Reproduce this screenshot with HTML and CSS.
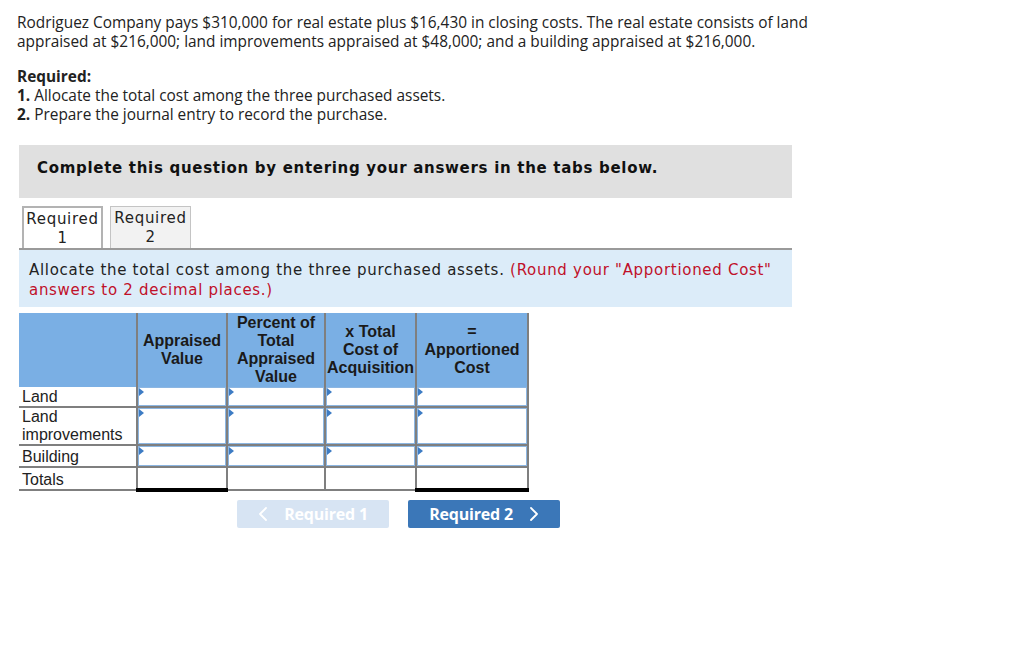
FILE: index.html
```html
<!DOCTYPE html>
<html>
<head>
<meta charset="utf-8">
<link rel="stylesheet" href="styles.css">
</head>
<body>
<div class="page">
  <div class="question">
    <p class="intro">Rodriguez Company pays $310,000 for real estate plus $16,430 in closing costs. The real estate consists of land appraised at $216,000; land improvements appraised at $48,000; and a building appraised at $216,000.</p>
    <p class="req-title">Required:</p>
    <p class="req-line"><b>1.</b> Allocate the total cost among the three purchased assets.</p>
    <p class="req-line"><b>2.</b> Prepare the journal entry to record the purchase.</p>
  </div>

  <div class="instructions">Complete this question by entering your answers in the tabs below.</div>

  <div class="tabs">
    <div class="tab active">Required<br>1</div>
    <div class="tab">Required<br>2</div>
  </div>

  <div class="panel">Allocate the total cost among the three purchased assets. <span class="red">(Round your "Apportioned Cost" answers to 2 decimal places.)</span></div>

  <table class="grid">
    <colgroup>
      <col class="c1"><col class="c2"><col class="c3"><col class="c4"><col class="c5">
    </colgroup>
    <thead>
      <tr>
        <th class="lab"></th>
        <th>Appraised<br>Value</th>
        <th>Percent of<br>Total<br>Appraised<br>Value</th>
        <th>x Total<br>Cost of<br>Acquisition</th>
        <th>=<br>Apportioned<br>Cost</th>
      </tr>
    </thead>
    <tbody>
      <tr class="r-land">
        <td class="lab">Land</td>
        <td><div class="inp"></div></td>
        <td><div class="inp"></div></td>
        <td><div class="inp"></div></td>
        <td><div class="inp"></div></td>
      </tr>
      <tr class="r-impr">
        <td class="lab">Land<br>improvements</td>
        <td><div class="inp"></div></td>
        <td><div class="inp"></div></td>
        <td><div class="inp"></div></td>
        <td><div class="inp"></div></td>
      </tr>
      <tr class="r-bldg">
        <td class="lab">Building</td>
        <td><div class="inp"></div></td>
        <td><div class="inp"></div></td>
        <td><div class="inp"></div></td>
        <td><div class="inp"></div></td>
      </tr>
      <tr class="r-tot">
        <td class="lab">Totals</td>
        <td class="total"></td>
        <td></td>
        <td></td>
        <td class="total"></td>
      </tr>
    </tbody>
  </table>

  <div class="nav">
    <div class="btn disabled">
      <svg class="chev" width="10" height="16" viewBox="0 0 10 16"><path d="M8 2 L2 8 L8 14" fill="none" stroke="#fff" stroke-width="1.8" stroke-linecap="round" stroke-linejoin="round"/></svg>
      <span>Required 1</span>
    </div>
    <div class="btn primary">
      <span>Required 2</span>
      <svg class="chev" width="10" height="16" viewBox="0 0 10 16"><path d="M2 2 L8 8 L2 14" fill="none" stroke="#fff" stroke-width="1.8" stroke-linecap="round" stroke-linejoin="round"/></svg>
    </div>
  </div>
</div>
</body>
</html>
```

FILE: styles.css
```css
html, body {
  margin: 0;
  padding: 0;
  background: #fff;
}

.page {
  padding: 13px 0 0 17px;
  width: 800px;
}

.question {
  font-family: "Open Sans", "Liberation Sans", sans-serif;
  font-size: 15.4px;
  color: #222;
  line-height: 19px;
}

.question p {
  margin: 0;
}

.intro {
  width: 800px;
}

.req-title {
  font-weight: bold;
  margin-top: 16px !important;
}

.instructions {
  margin: 21px 0 0 2px;
  width: 773px;
  box-sizing: border-box;
  height: 53px;
  padding: 14px 0 0 18px;
  background: #e0e0e0;
  font-family: "DejaVu Sans", Verdana, sans-serif;
  font-weight: bold;
  font-size: 15px;
  letter-spacing: 0.7px;
  color: #111;
}

.tabs {
  display: flex;
  margin: 8px 0 0 2px;
  width: 773px;
  border-bottom: 2px solid #9a9a9a;
  gap: 7px;
  padding-left: 3px;
  box-sizing: border-box;
}

.tab {
  width: 81px;
  height: 42px;
  box-sizing: border-box;
  border: 1px solid #c4c4c4;
  border-bottom: none;
  background: #f2f2f2;
  font-family: "DejaVu Sans", Verdana, sans-serif;
  font-size: 15px;
  letter-spacing: 0.7px;
  line-height: 19px;
  text-align: center;
  color: #222;
  padding-top: 2px;
}

.tab.active {
  background: #fff;
  border: 2px solid #b3b3b3;
  border-bottom: none;
}

.panel {
  margin-left: 2px;
  width: 773px;
  box-sizing: border-box;
  background: #dcecf9;
  height: 57px;
  padding: 10px 8px 0 10px;
  font-family: "DejaVu Sans", Verdana, sans-serif;
  font-size: 15px;
  letter-spacing: 0.7px;
  line-height: 20px;
  color: #222;
}

.red {
  color: #c0102a;
}

.grid {
  margin: 6px 0 0 2px;
  border-collapse: collapse;
  table-layout: fixed;
  width: 509px;
  font-family: "Liberation Sans", Arial, sans-serif;
  font-size: 16px;
  color: #222;
}

col.c1 { width: 118px; }
col.c2 { width: 90px; }
col.c3 { width: 98px; }
col.c4 { width: 91px; }
col.c5 { width: 112px; }

.grid th {
  background: #7aafe4;
  font-weight: bold;
  font-size: 16px;
  line-height: 18px;
  height: 74px;
  padding: 0;
  border-left: 2px solid #7f7f7f;
  border-right: 2px solid #7f7f7f;
  vertical-align: middle;
  text-align: center;
  color: #1a1a1a;
  white-space: nowrap;
}

.grid th.lab {
  border-left: none;
}

.grid td {
  padding: 0;
  border: 2px solid #7f7f7f;
  vertical-align: top;
}

.grid td.lab {
  border-left: none;
  padding: 0 0 0 3px;
  line-height: 18px;
  vertical-align: bottom;
  white-space: nowrap;
}

.r-land td { height: 19px; }
.r-impr td { height: 36px; }
.r-bldg td { height: 20px; }
.r-tot td { height: 20px; }

.grid tbody tr:first-child td {
  border-top: none;
}

.inp {
  position: relative;
  box-sizing: border-box;
  border: 1px solid #8cb6e2;
  background: #fff;
}

.r-land .inp { height: 19px; }
.r-impr .inp { height: 36px; }
.r-bldg .inp { height: 20px; }

.inp::before {
  content: "";
  position: absolute;
  left: 0;
  top: 0;
  border-left: 5px solid #3d7cc4;
  border-top: 4px solid transparent;
  border-bottom: 4px solid transparent;
}

.grid td.total {
  border-top: 2px solid #000;
  border-bottom: 4px solid #000;
}

.nav {
  display: flex;
  gap: 19px;
  margin: 8px 0 0 220px;
}

.btn {
  width: 152px;
  height: 28px;
  box-sizing: border-box;
  border-radius: 2px;
  display: flex;
  align-items: center;
  justify-content: center;
  gap: 16px;
  font-family: "Open Sans", "Liberation Sans", sans-serif;
  font-weight: bold;
  font-size: 16px;
  letter-spacing: -0.2px;
  color: #fff;
}

.btn.disabled {
  background: #d7e4f3;
}

.btn.primary {
  background: #3b77b8;
}
```
